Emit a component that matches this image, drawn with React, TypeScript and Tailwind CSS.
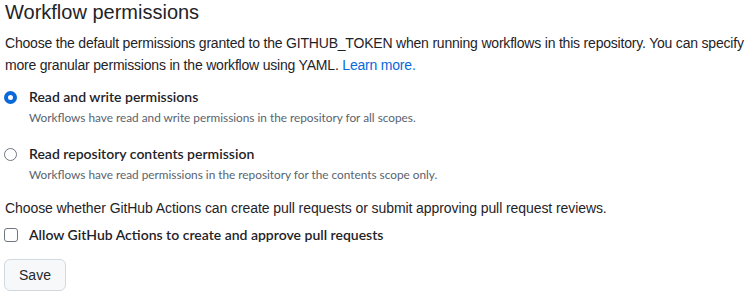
import React from 'react'

const font = { fontFamily: '"Liberation Sans", Arial, sans-serif' }
const lato = { fontFamily: 'Lato, "Liberation Sans", sans-serif' }

function Radio({ checked }: { checked?: boolean }) {
  return checked ? (
    <span className="box-border block h-[13px] w-[13px] shrink-0 rounded-full border-[4px] border-[#0969da] bg-white" />
  ) : (
    <span className="box-border block h-[13px] w-[13px] shrink-0 rounded-full border border-[#6e7781] bg-white" />
  )
}

function RadioOption({
  label,
  note,
  checked,
  className = '',
}: {
  label: string
  note: string
  checked?: boolean
  className?: string
}) {
  return (
    <div className={className}>
      <label className="ml-[-1px] flex items-center gap-[12px]">
        <Radio checked={checked} />
        <span className="text-[14px] font-semibold leading-[20px] text-[#1f2328]" style={lato}>
          {label}
        </span>
      </label>
      <p className="mt-[2px] pl-[24px] text-[11.8px] leading-[18px] text-[#59636e]" style={lato}>
        {note}
      </p>
    </div>
  )
}

export default function App() {
  return (
    <div className="h-[298px] w-[754px] overflow-hidden bg-white px-[5px]" style={font}>
      <h2 className="text-[20px] font-normal leading-[24px] text-[#1f2328]">Workflow permissions</h2>
      <p className="mt-[8px] text-[14px] leading-[22px] tracking-[-0.2px] text-[#1f2328]">
        Choose the default permissions granted to the GITHUB_TOKEN when running workflows in this
        repository. You can specify more granular permissions in the workflow using YAML.{' '}
        <a href="#" className="text-[#0969da]">
          Learn more.
        </a>
      </p>

      <RadioOption
        className="mt-[11px]"
        checked
        label="Read and write permissions"
        note="Workflows have read and write permissions in the repository for all scopes."
      />
      <RadioOption
        className="mt-[17px]"
        label="Read repository contents permission"
        note="Workflows have read permissions in the repository for the contents scope only."
      />

      <p className="mt-[13px] text-[14px] leading-[22px] tracking-[-0.08px] text-[#1f2328]">
        Choose whether GitHub Actions can create pull requests or submit approving pull request reviews.
      </p>
      <label className="mt-[6px] ml-[-1px] flex items-center gap-[11px]">
        <span className="box-border block h-[14px] w-[14px] shrink-0 rounded-[3px] border border-[#6e7781] bg-white" />
        <span className="text-[14px] font-semibold leading-[20px] text-[#1f2328]" style={lato}>
          Allow GitHub Actions to create and approve pull requests
        </span>
      </label>

      <button
        type="button"
        className="mt-[14px] ml-[-1px] h-[32px] w-[62px] rounded-[6px] border border-[#d1d9e0] bg-[#f6f8fa] text-[14px] font-medium text-[#25292e]"
      >
        Save
      </button>
    </div>
  )
}
